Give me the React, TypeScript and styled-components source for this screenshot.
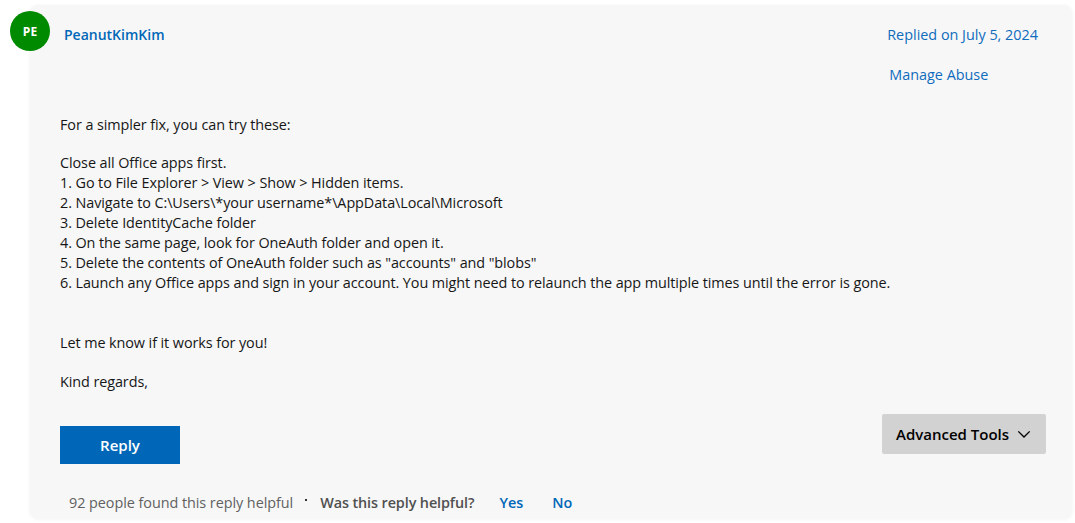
import React from "react";
import styled, { createGlobalStyle } from "styled-components";

const Global = createGlobalStyle`
  html, body { margin: 0; padding: 0; background: #ffffff; }
  body { font-family: "Open Sans", "Noto Sans", sans-serif; }
`;

const Page = styled.div`
  width: 1075px;
  height: 523px;
  padding: 5px 3px 0 30px;
  box-sizing: border-box;
`;

const Card = styled.div`
  position: relative;
  height: 513px;
  box-sizing: border-box;
  background: #f7f7f7;
  border-radius: 8px;
  box-shadow: 0 1px 4px rgba(0, 0, 0, 0.06);
  padding: 20px 34px 0 30px;
  display: flex;
  flex-direction: column;
`;

const Avatar = styled.div`
  position: absolute;
  left: -20px;
  top: 6px;
  width: 40px;
  height: 40px;
  border-radius: 50%;
  background: #008a00;
  color: #fff;
  font-size: 12px;
  font-weight: 700;
  display: flex;
  align-items: center;
  justify-content: center;
`;

const Header = styled.div`
  display: flex;
  justify-content: space-between;
  align-items: flex-start;
`;

const Name = styled.a`
  margin-left: 4px;
  color: #0067b8;
  font-size: 14px;
  font-weight: 600;
  line-height: 20px;
  text-decoration: none;
`;

const Meta = styled.div`
  display: flex;
  flex-direction: column;
  align-items: flex-start;
  gap: 20px;
`;

const MetaLink = styled.a<{ $shift?: number }>`
  color: #0f6cbd;
  font-size: 14.4px;
  line-height: 20px;
  text-decoration: none;
  margin-left: ${(p) => p.$shift ?? 0}px;
`;

const Body = styled.div`
  margin-top: 30px;
  color: #161616;
  font-size: 14.4px;
  line-height: 20px;
  letter-spacing: -0.08px;
`;

const Para = styled.p<{ $gap: number }>`
  margin: ${(p) => p.$gap}px 0 0;
`;

const Actions = styled.div`
  display: flex;
  justify-content: space-between;
  align-items: flex-start;
  margin-top: 22px;
  margin-right: -8px;
`;

const ReplyButton = styled.button`
  margin-top: 12px;
  width: 120px;
  height: 38px;
  border: none;
  background: #0067b8;
  color: #fff;
  font-family: inherit;
  font-size: 15px;
  font-weight: 600;
  cursor: pointer;
`;

const ToolsButton = styled.button`
  width: 164px;
  height: 40px;
  padding: 0 0 0 14px;
  border: none;
  border-radius: 2px;
  background: #d2d2d2;
  color: #000;
  font-family: inherit;
  font-size: 15px;
  font-weight: 600;
  display: flex;
  align-items: center;
  gap: 8px;
  cursor: pointer;
`;

const Footer = styled.div`
  margin-top: 29px;
  margin-left: 9px;
  display: flex;
  align-items: center;
  font-size: 14.4px;
  line-height: 20px;
`;

const Helpful = styled.span`
  color: #616161;
  letter-spacing: -0.05px;
`;

const Dot = styled.span`
  width: 2px;
  height: 2px;
  background: #333;
  margin: 0 13px 6px 12px;
`;

const Question = styled.span`
  color: #505050;
  font-weight: 600;
  letter-spacing: -0.1px;
`;

const Vote = styled.a<{ $ml: number }>`
  margin-left: ${(p) => p.$ml}px;
  color: #0067b8;
  font-weight: 600;
  text-decoration: none;
`;

const Chevron = () => (
  <svg width="14" height="14" viewBox="0 0 16 16" fill="none">
    <path d="M1.5 5 L8 11.5 L14.5 5" stroke="#000" strokeWidth="1.6" />
  </svg>
);

const steps = [
  "Close all Office apps first.",
  "1. Go to File Explorer > View > Show > Hidden items.",
  "2. Navigate to C:\\Users\\*your username*\\AppData\\Local\\Microsoft",
  "3. Delete IdentityCache folder",
  "4. On the same page, look for OneAuth folder and open it.",
  '5. Delete the contents of OneAuth folder such as "accounts" and "blobs"',
  "6. Launch any Office apps and sign in your account. You might need to relaunch the app multiple times until the error is gone.",
];

export default function App() {
  return (
    <>
      <Global />
      <Page>
        <Card>
          <Avatar>PE</Avatar>
          <Header>
            <Name href="#">PeanutKimKim</Name>
            <Meta>
              <MetaLink href="#">Replied on July 5, 2024</MetaLink>
              <MetaLink href="#" $shift={2}>Manage Abuse</MetaLink>
            </Meta>
          </Header>
          <Body>
            <Para $gap={0}>For a simpler fix, you can try these:</Para>
            <Para $gap={18}>
              {steps.map((s, i) => (
                <React.Fragment key={i}>
                  {s}
                  {i < steps.length - 1 && <br />}
                </React.Fragment>
              ))}
            </Para>
            <Para $gap={40}>Let me know if it works for you!</Para>
            <Para $gap={19}>Kind regards,</Para>
          </Body>
          <Actions>
            <ReplyButton>Reply</ReplyButton>
            <ToolsButton>
              Advanced Tools <Chevron />
            </ToolsButton>
          </Actions>
          <Footer>
            <Helpful>92 people found this reply helpful</Helpful>
            <Dot />
            <Question>Was this reply helpful?</Question>
            <Vote href="#" $ml={25}>Yes</Vote>
            <Vote href="#" $ml={29}>No</Vote>
          </Footer>
        </Card>
      </Page>
    </>
  );
}
